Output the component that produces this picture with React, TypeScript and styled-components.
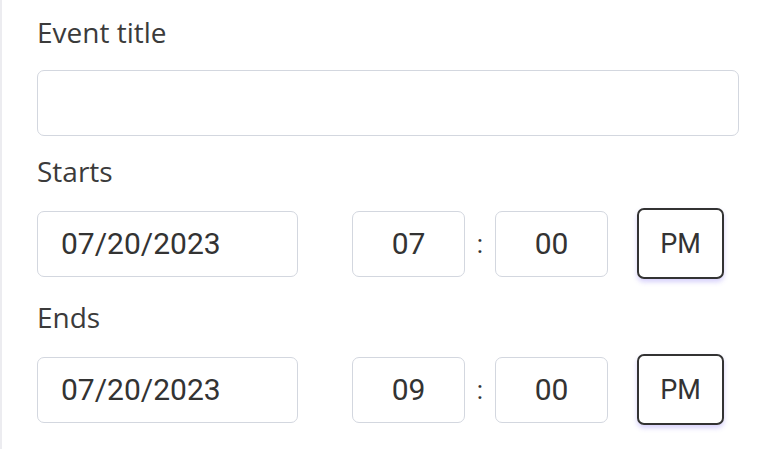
import React from 'react';
import styled, { createGlobalStyle } from 'styled-components';

const GlobalStyle = createGlobalStyle`
  html, body {
    margin: 0;
    padding: 0;
    background: #ffffff;
  }
  * {
    box-sizing: border-box;
  }
`;

const Panel = styled.div`
  width: 768px;
  height: 449px;
  overflow: hidden;
  border-left: 2px solid #ececf0;
  padding: 15px 0 0 35px;
  display: flex;
  flex-direction: column;
`;

const Label = styled.div<{ $top: number; $bottom: number }>`
  font-family: "Open Sans", "Liberation Sans", sans-serif;
  font-size: 28px;
  line-height: 34px;
  color: #3b3b3b;
  margin-top: ${p => p.$top}px;
  margin-bottom: ${p => p.$bottom}px;
`;

const TitleInput = styled.div`
  width: 702px;
  height: 66px;
  border: 1.5px solid #d3d7df;
  border-radius: 7px;
`;

const Row = styled.div`
  display: flex;
  align-items: center;
  height: 71px;
`;

const Box = styled.div<{ $w: number; $center?: boolean }>`
  width: ${p => p.$w}px;
  height: 66px;
  border: 1.5px solid #d3d7df;
  border-radius: 7px;
  display: flex;
  align-items: center;
  justify-content: ${p => (p.$center ? 'center' : 'flex-start')};
  padding-left: ${p => (p.$center ? 0 : 23)}px;
  font-family: Roboto, "Liberation Sans", sans-serif;
  font-size: 30px;
  color: #333333;
`;

const Colon = styled.div`
  width: 30px;
  text-align: center;
  font-family: Roboto, "Liberation Sans", sans-serif;
  font-size: 26px;
  color: #333333;
`;

const PmButton = styled.div`
  width: 87px;
  height: 71px;
  margin-left: 29px;
  border: 2px solid #333333;
  border-radius: 7px;
  box-shadow: 0 3px 5px rgba(110, 90, 240, 0.28);
  display: flex;
  align-items: center;
  justify-content: center;
  font-family: Roboto, "Liberation Sans", sans-serif;
  font-size: 27px;
  color: #333333;
`;

const TimeRow: React.FC<{ date: string; hour: string; minute: string }> = ({ date, hour, minute }) => (
  <Row>
    <Box $w={261}>{date}</Box>
    <Box $w={113} $center style={{ marginLeft: 54 }}>{hour}</Box>
    <Colon>:</Colon>
    <Box $w={113} $center>{minute}</Box>
    <PmButton>PM</PmButton>
  </Row>
);

export default function App() {
  return (
    <>
      <GlobalStyle />
      <Panel>
        <Label $top={0} $bottom={21}>Event title</Label>
        <TitleInput />
        <Label $top={18} $bottom={20}>Starts</Label>
        <TimeRow date="07/20/2023" hour="07" minute="00" />
        <Label $top={21} $bottom={20}>Ends</Label>
        <TimeRow date="07/20/2023" hour="09" minute="00" />
      </Panel>
    </>
  );
}
